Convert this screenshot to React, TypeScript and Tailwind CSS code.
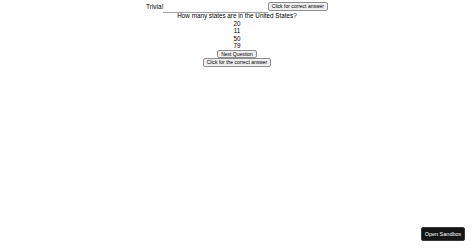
export default function App() {
  const answers = ["20", "11", "50", "79"];
  return (
    <div className="relative h-[248px] w-[474px] bg-white font-['Liberation_Sans',Arial,sans-serif] text-black">
      <div className="mx-auto flex w-[182px] flex-col items-center pt-[2px]">
        <div className="flex h-[10px] w-full items-start">
          <span className="pt-[1px] text-[6.5px] leading-[7px]">Trivia!</span>
          <div className="mt-[10px] h-px flex-1 bg-[#a0a0a0]" />
          <button className="h-[9px] rounded-[2px] border border-[#8f8f8f] bg-[#efefef] px-[3px] text-[5px] leading-[7px]">
            Click for correct answer
          </button>
        </div>
        <div className="text-[6.3px] leading-[7.5px]">How many states are in the United States?</div>
        {answers.map((a) => (
          <div key={a} className="text-[6.3px] leading-[7.5px]">{a}</div>
        ))}
        <button className="h-[8.5px] rounded-[2px] border border-[#8f8f8f] bg-[#efefef] px-[3px] text-[5px] leading-[6.5px]">
          Next Question
        </button>
        <button className="h-[8.5px] rounded-[2px] border border-[#8f8f8f] bg-[#efefef] px-[3px] text-[5px] leading-[6.5px]">
          Click for the correct answer
        </button>
      </div>
      <button className="absolute bottom-[7px] right-[9px] h-[14px] w-[44px] rounded-[2px] border border-[#3a3a3a] bg-[#151515] text-[5.5px] text-white">
        Open Sandbox
      </button>
    </div>
  );
}
